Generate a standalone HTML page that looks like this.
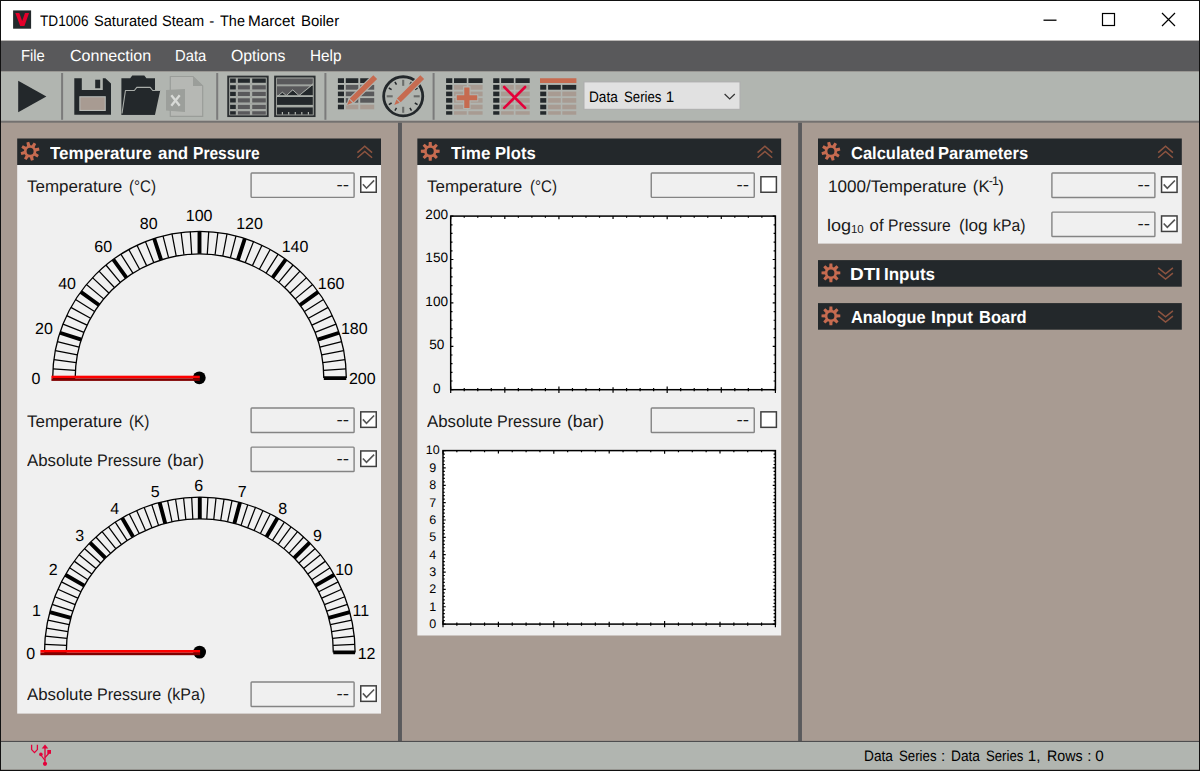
<!DOCTYPE html>
<html><head><meta charset="utf-8"><title>TD1006 Saturated Steam - The Marcet Boiler</title>
<style>
html,body{margin:0;padding:0}
body{width:1200px;height:771px;overflow:hidden;position:relative;background:#111;font-family:"Liberation Sans", sans-serif}
svg#g{position:absolute;left:0;top:0}
.t{position:absolute;white-space:pre;line-height:1;text-rendering:geometricPrecision}

</style></head><body>
<svg id="g" width="1200" height="771" viewBox="0 0 1200 771">
<rect x="0.00" y="0.00" width="1200.00" height="771.00" fill="#111" />
<rect x="1.00" y="1.00" width="1198.00" height="768.60" fill="#a89b92" />
<rect x="1.00" y="1.00" width="1198.00" height="39.70" fill="#fff" />
<rect x="1.00" y="40.70" width="1198.00" height="30.80" fill="#59595b" />
<rect x="1.00" y="71.50" width="1198.00" height="49.30" fill="#b1b5b0" />
<rect x="1.00" y="120.80" width="1198.00" height="1.90" fill="#737170" />
<rect x="398.00" y="122.70" width="3.95" height="618.50" fill="#5a5a5c" />
<rect x="798.15" y="122.70" width="3.80" height="618.50" fill="#5a5a5c" />
<rect x="1.00" y="742.00" width="1198.00" height="27.60" fill="#b1b5b0" />
<rect x="1.00" y="740.90" width="1198.00" height="1.10" fill="#4d4d4f" />
<rect x="13.10" y="10.40" width="18.00" height="18.30" fill="#23282b" />
<path d="M15.3 13.1 L19.3 13.1 L22.15 21.0 L25.0 13.1 L29.1 13.1 L24.4 26 L20.2 26 Z" fill="#e4002b"/>
<path d="M1043.5 20.2 H1056.5" stroke="#000" stroke-width="1.3" fill="none"/>
<rect x="1102.5" y="13.5" width="12" height="12" stroke="#000" stroke-width="1.2" fill="none"/>
<path d="M1162 13 L1175 26 M1175 13 L1162 26" stroke="#000" stroke-width="1.2" fill="none"/>
<rect x="61.10" y="73.00" width="2.00" height="46.80" fill="#7b7b7b" />
<rect x="216.20" y="73.00" width="2.00" height="46.80" fill="#7b7b7b" />
<rect x="324.40" y="73.00" width="2.00" height="46.80" fill="#7b7b7b" />
<rect x="432.60" y="73.00" width="2.00" height="46.80" fill="#7b7b7b" />
<path d="M18.2 80.8 L46.4 96.5 L18.2 112.2 Z" fill="#23282b"/>
<path d="M74.3 78.25 H81.8 V89.9 H102.8 V78.25 H105.4 L111 83.4 V114.7 H74.3 Z" fill="#23282b"/>
<rect x="95.20" y="79.70" width="5.00" height="8.55" fill="#23282b" />
<rect x="79.30" y="96.20" width="26.50" height="14.80" fill="#b9bcb8" />
<rect x="80.40" y="97.30" width="24.30" height="12.60" fill="#a89b92" />
<path d="M121.4 78.25 H130.2 L132.25 75.5 H144.3 L146.4 78.25 H155 V114.7 H121.4 Z" fill="#23282b"/>
<path d="M125.3 90.5 H134.3 L136.8 87.4 H150.2 L152.7 90.5 H160.2 L155 114.7 H121.6 Z" fill="#23282b"/>
<path d="M122.0 113.5 L125.45 90.5 H134.3 L136.8 87.4 H150.2 L152.7 90.5 H160.0" fill="none" stroke="#a9ada9" stroke-width="1.1" stroke-linejoin="round"/>
<path d="M170.3 76.5 H193 L202.7 86 V116.4 H170.3 Z" fill="#b6b8b4" stroke="#9a9d99" stroke-width="1.2"/>
<path d="M193 76.5 L202.7 86 H193 Z" fill="#9b9e9a"/>
<path d="M166 90.1 L185 89 V112 L166 110.5 Z" fill="#9c9f9b"/>
<path d="M171.3 95.2 L179.7 105.8 M179.7 95.2 L171.3 105.8" stroke="#d8dad7" stroke-width="2.3" fill="none"/>
<rect x="228.30" y="76.7" width="39.3" height="39.3" fill="#b1b5b0" stroke="#2b2f31" stroke-width="2.1"/>
<rect x="229.80" y="78.0" width="36.5" height="37.0" fill="none" stroke="#9b9e9a" stroke-width="0.8"/>
<rect x="230.10" y="78.50" width="5.70" height="4.30" fill="#23282b" />
<rect x="237.80" y="78.50" width="12.10" height="4.30" fill="#23282b" />
<rect x="252.20" y="78.50" width="13.60" height="4.30" fill="#23282b" />
<rect x="230.10" y="85.20" width="5.70" height="4.30" fill="#23282b" />
<rect x="237.80" y="85.20" width="12.10" height="4.30" fill="#59595b" />
<rect x="252.20" y="85.20" width="13.60" height="4.30" fill="#59595b" />
<rect x="230.10" y="91.75" width="5.70" height="4.30" fill="#23282b" />
<rect x="237.80" y="91.75" width="12.10" height="4.30" fill="#59595b" />
<rect x="252.20" y="91.75" width="13.60" height="4.30" fill="#59595b" />
<rect x="230.10" y="98.25" width="5.70" height="4.30" fill="#23282b" />
<rect x="237.80" y="98.25" width="12.10" height="4.30" fill="#59595b" />
<rect x="252.20" y="98.25" width="13.60" height="4.30" fill="#59595b" />
<rect x="230.10" y="104.75" width="5.70" height="4.30" fill="#23282b" />
<rect x="237.80" y="104.75" width="12.10" height="4.30" fill="#59595b" />
<rect x="252.20" y="104.75" width="13.60" height="4.30" fill="#59595b" />
<rect x="230.10" y="111.20" width="5.70" height="3.40" fill="#23282b" />
<rect x="237.80" y="111.20" width="12.10" height="3.40" fill="#59595b" />
<rect x="252.20" y="111.20" width="13.60" height="3.40" fill="#59595b" />
<path d="M229.8 84.0 H266.3 M229.8 90.55 H266.3 M229.8 97.1 H266.3 M229.8 103.6 H266.3 M229.8 110.1 H266.3 M236.8 78 V115 M251.05 78 V115" stroke="#9b9e9a" stroke-width="0.8" fill="none"/>
<rect x="275.20" y="76.7" width="39.3" height="39.3" fill="#b1b5b0" stroke="#2b2f31" stroke-width="2.1"/>
<rect x="276.70" y="78.0" width="36.5" height="37.0" fill="none" stroke="#9b9e9a" stroke-width="0.8"/>
<path d="M277 78.5 H312.8 V83.3 L311.4 84.5 H277 Z" fill="#59595b"/>
<path d="M277 86.3 H310 L299 95.2 L292.7 89.9 L286.3 95.2 L282.4 92.4 L277 95.2 Z" fill="#59595b"/>
<path d="M277 95.3 L282.4 92.6 L286.3 95.3 L292.7 90.2 L299 95.3 L312.8 84.6 V95.3 Z" fill="#23282b"/>
<path d="M276.4 85.35 H313.4 M276.4 95.9 H313.4 M276.4 106.15 H313.4" stroke="#9b9e9a" stroke-width="0.9" fill="none"/>
<path d="M276.6 97 L282.4 92.2 L286.3 95.6 L292.7 89.8 L299 95.6 L313.2 84.2" fill="none" stroke="#b1b5b0" stroke-width="0.9"/>
<rect x="277.00" y="97.00" width="35.80" height="7.90" fill="#23282b" />
<rect x="277.00" y="107.40" width="35.80" height="7.10" fill="#23282b" />
<rect x="281.80" y="112.00" width="1.20" height="2.60" fill="#b1b5b0" />
<rect x="288.10" y="112.00" width="1.20" height="2.60" fill="#b1b5b0" />
<rect x="294.70" y="112.00" width="1.20" height="2.60" fill="#b1b5b0" />
<rect x="301.20" y="112.00" width="1.20" height="2.60" fill="#b1b5b0" />
<rect x="307.80" y="112.00" width="1.20" height="2.60" fill="#b1b5b0" />
<rect x="337.90" y="78.25" width="6.10" height="4.75" fill="#23282b" />
<rect x="345.80" y="78.25" width="12.50" height="4.75" fill="#23282b" />
<rect x="360.20" y="78.25" width="14.00" height="4.75" fill="#23282b" />
<rect x="337.90" y="84.90" width="6.10" height="4.80" fill="#23282b" />
<rect x="345.80" y="84.90" width="12.50" height="4.80" fill="#59595b" />
<rect x="360.20" y="84.90" width="14.00" height="4.80" fill="#59595b" />
<rect x="337.90" y="91.60" width="6.10" height="4.60" fill="#23282b" />
<rect x="345.80" y="91.60" width="12.50" height="4.60" fill="#59595b" />
<rect x="360.20" y="91.60" width="14.00" height="4.60" fill="#59595b" />
<rect x="337.90" y="98.10" width="6.10" height="4.60" fill="#23282b" />
<rect x="345.80" y="98.10" width="12.50" height="4.60" fill="#59595b" />
<rect x="360.20" y="98.10" width="14.00" height="4.60" fill="#59595b" />
<rect x="337.90" y="104.70" width="6.10" height="4.60" fill="#23282b" />
<rect x="345.80" y="104.70" width="12.50" height="4.60" fill="#a89b92" />
<rect x="360.20" y="104.70" width="14.00" height="4.60" fill="#a89b92" />
<path d="M372.60 74.57 L348.28 98.54 L346.25 105.74 L353.47 103.81 L377.80 79.83 Z" fill="#b1b5b0"/>
<path d="M373.30 75.28 L349.76 98.48 L353.55 102.33 L377.10 79.12 Z M349.30 99.58 L347.10 104.90 L352.45 102.78 Z" fill="#c66b50"/>
<circle cx="403.2" cy="96.3" r="19.55" fill="none" stroke="#23282b" stroke-width="2.8"/>
<path d="M403.20 85.80 L403.20 79.80" stroke="#6b6d6b" stroke-width="2.1"/>
<path d="M409.90 84.70 L411.50 81.92" stroke="#23282b" stroke-width="1.5"/>
<path d="M414.80 89.60 L417.58 88.00" stroke="#23282b" stroke-width="1.5"/>
<path d="M413.70 96.30 L419.70 96.30" stroke="#6b6d6b" stroke-width="2.1"/>
<path d="M414.80 103.00 L417.58 104.60" stroke="#23282b" stroke-width="1.5"/>
<path d="M409.90 107.90 L411.50 110.68" stroke="#23282b" stroke-width="1.5"/>
<path d="M403.20 106.80 L403.20 112.80" stroke="#6b6d6b" stroke-width="2.1"/>
<path d="M396.50 107.90 L394.90 110.68" stroke="#23282b" stroke-width="1.5"/>
<path d="M391.60 103.00 L388.82 104.60" stroke="#23282b" stroke-width="1.5"/>
<path d="M392.70 96.30 L386.70 96.30" stroke="#6b6d6b" stroke-width="2.1"/>
<path d="M391.60 89.60 L388.82 88.00" stroke="#23282b" stroke-width="1.5"/>
<path d="M396.50 84.70 L394.90 81.92" stroke="#23282b" stroke-width="1.5"/>
<path d="M419.59 74.57 L395.45 98.54 L393.45 105.75 L400.67 103.79 L424.81 79.83 Z" fill="#b1b5b0"/>
<path d="M420.30 75.28 L396.94 98.47 L400.74 102.31 L424.10 79.12 Z M396.48 99.58 L394.30 104.90 L399.64 102.76 Z" fill="#c66b50"/>
<rect x="446.10" y="78.25" width="6.20" height="4.75" fill="#23282b" />
<rect x="454.00" y="78.25" width="12.75" height="4.75" fill="#23282b" />
<rect x="468.40" y="78.25" width="14.20" height="4.75" fill="#23282b" />
<rect x="446.10" y="84.90" width="6.20" height="4.80" fill="#23282b" />
<rect x="454.00" y="84.90" width="12.75" height="4.80" fill="#a89b92" />
<rect x="468.40" y="84.90" width="14.20" height="4.80" fill="#a89b92" />
<rect x="446.10" y="91.60" width="6.20" height="4.60" fill="#23282b" />
<rect x="454.00" y="91.60" width="12.75" height="4.60" fill="#a89b92" />
<rect x="468.40" y="91.60" width="14.20" height="4.60" fill="#a89b92" />
<rect x="446.10" y="98.10" width="6.20" height="4.60" fill="#23282b" />
<rect x="454.00" y="98.10" width="12.75" height="4.60" fill="#a89b92" />
<rect x="468.40" y="98.10" width="14.20" height="4.60" fill="#a89b92" />
<rect x="446.10" y="104.70" width="6.20" height="4.60" fill="#23282b" />
<rect x="454.00" y="104.70" width="12.75" height="4.60" fill="#a89b92" />
<rect x="468.40" y="104.70" width="14.20" height="4.60" fill="#a89b92" />
<rect x="446.10" y="111.20" width="6.20" height="3.50" fill="#23282b" />
<rect x="454.00" y="111.20" width="12.75" height="3.50" fill="#a89b92" />
<rect x="468.40" y="111.20" width="14.20" height="3.50" fill="#a89b92" />
<path d="M464.25 87.4 H469.5 V95.3 H477.2 V100.3 H469.5 V108 H464.25 V100.3 H456.75 V95.3 H464.25 Z" fill="#c66b50" stroke="#b1b5b0" stroke-width="2.2" paint-order="stroke"/>
<rect x="493.20" y="78.25" width="6.20" height="4.75" fill="#23282b" />
<rect x="501.10" y="78.25" width="12.70" height="4.75" fill="#23282b" />
<rect x="515.50" y="78.25" width="14.20" height="4.75" fill="#23282b" />
<rect x="493.20" y="84.90" width="6.20" height="4.80" fill="#23282b" />
<rect x="501.10" y="84.90" width="12.70" height="4.80" fill="#a89b92" />
<rect x="515.50" y="84.90" width="14.20" height="4.80" fill="#a89b92" />
<rect x="493.20" y="91.60" width="6.20" height="4.60" fill="#23282b" />
<rect x="501.10" y="91.60" width="12.70" height="4.60" fill="#a89b92" />
<rect x="515.50" y="91.60" width="14.20" height="4.60" fill="#a89b92" />
<rect x="493.20" y="98.10" width="6.20" height="4.60" fill="#23282b" />
<rect x="501.10" y="98.10" width="12.70" height="4.60" fill="#a89b92" />
<rect x="515.50" y="98.10" width="14.20" height="4.60" fill="#a89b92" />
<rect x="493.20" y="104.70" width="6.20" height="4.60" fill="#23282b" />
<rect x="501.10" y="104.70" width="12.70" height="4.60" fill="#a89b92" />
<rect x="515.50" y="104.70" width="14.20" height="4.60" fill="#a89b92" />
<rect x="493.20" y="111.20" width="6.20" height="3.50" fill="#23282b" />
<rect x="501.10" y="111.20" width="12.70" height="3.50" fill="#a89b92" />
<rect x="515.50" y="111.20" width="14.20" height="3.50" fill="#a89b92" />
<path d="M504.2 87 L525.1 107.9 M525.1 87 L504.2 107.9" stroke="#e4003a" stroke-width="2.6" stroke-linecap="round" fill="none"/>
<rect x="540.00" y="78.25" width="36.40" height="4.75" fill="#c66b50" />
<rect x="540.20" y="84.90" width="6.05" height="4.80" fill="#23282b" />
<rect x="548.10" y="84.90" width="12.70" height="4.80" fill="#23282b" />
<rect x="562.30" y="84.90" width="13.95" height="4.80" fill="#23282b" />
<rect x="540.20" y="91.60" width="6.05" height="4.60" fill="#23282b" />
<rect x="548.10" y="91.60" width="12.70" height="4.60" fill="#a89b92" />
<rect x="562.30" y="91.60" width="13.95" height="4.60" fill="#a89b92" />
<rect x="540.20" y="98.10" width="6.05" height="4.60" fill="#23282b" />
<rect x="548.10" y="98.10" width="12.70" height="4.60" fill="#a89b92" />
<rect x="562.30" y="98.10" width="13.95" height="4.60" fill="#a89b92" />
<rect x="540.20" y="104.70" width="6.05" height="4.60" fill="#23282b" />
<rect x="548.10" y="104.70" width="12.70" height="4.60" fill="#a89b92" />
<rect x="562.30" y="104.70" width="13.95" height="4.60" fill="#a89b92" />
<rect x="540.20" y="111.20" width="6.05" height="3.50" fill="#23282b" />
<rect x="548.10" y="111.20" width="12.70" height="3.50" fill="#a89b92" />
<rect x="562.30" y="111.20" width="13.95" height="3.50" fill="#a89b92" />
<rect x="584" y="81.9" width="156" height="27.4" fill="#e1e1e1" stroke="#adadad" stroke-width="1"/>
<path d="M724.6 94 L729.7 99 L734.8 94" fill="none" stroke="#333" stroke-width="1.2"/>
<rect x="17.20" y="138.50" width="363.80" height="26.60" fill="#23282b" />
<path d="M27.05 146.02 L26.42 142.54 L29.24 141.84 L30.31 145.20 L31.00 145.27 L31.68 145.41 L33.69 142.50 L36.18 144.00 L34.56 147.14 L35.00 147.67 L35.38 148.25 L38.86 147.62 L39.56 150.44 L36.20 151.51 L36.13 152.20 L35.99 152.88 L38.90 154.89 L37.40 157.38 L34.26 155.76 L33.73 156.20 L33.15 156.58 L33.78 160.06 L30.96 160.76 L29.89 157.40 L29.20 157.33 L28.52 157.19 L26.51 160.10 L24.02 158.60 L25.64 155.46 L25.20 154.93 L24.82 154.35 L21.34 154.98 L20.64 152.16 L24.00 151.09 L24.07 150.40 L24.21 149.72 L21.30 147.71 L22.80 145.22 L25.94 146.84 L26.47 146.40 Z M26.60 151.30 a3.5 3.5 0 1 0 7.0 0 a3.5 3.5 0 1 0 -7.0 0 Z" fill="#c66b50" fill-rule="evenodd"/>
<path d="M357.40 152.60 L364.75 146.30 L372.10 152.60" fill="none" stroke="#8d5440" stroke-width="1.5"/>
<path d="M357.40 157.80 L364.75 151.50 L372.10 157.80" fill="none" stroke="#8d5440" stroke-width="1.5"/>
<rect x="17.20" y="165.00" width="363.80" height="548.60" fill="#f0f0f0" />
<rect x="251.10" y="172.95" width="103.0" height="24.4" rx="0.8" fill="#f0f0f0" stroke="#848484" stroke-width="1.4"/>
<rect x="360.75" y="176.75" width="15.5" height="15.5" fill="#fff" stroke="#404040" stroke-width="1.5"/>
<path d="M362.90 184.30 L366.50 188.20 L374.10 180.40" fill="none" stroke="#555" stroke-width="1.6"/>
<rect x="251.10" y="408.05" width="103.0" height="24.4" rx="0.8" fill="#f0f0f0" stroke="#848484" stroke-width="1.4"/>
<rect x="360.75" y="411.85" width="15.5" height="15.5" fill="#fff" stroke="#404040" stroke-width="1.5"/>
<path d="M362.90 419.40 L366.50 423.30 L374.10 415.50" fill="none" stroke="#555" stroke-width="1.6"/>
<rect x="251.10" y="447.15" width="103.0" height="24.4" rx="0.8" fill="#f0f0f0" stroke="#848484" stroke-width="1.4"/>
<rect x="360.75" y="450.95" width="15.5" height="15.5" fill="#fff" stroke="#404040" stroke-width="1.5"/>
<path d="M362.90 458.50 L366.50 462.40 L374.10 454.60" fill="none" stroke="#555" stroke-width="1.6"/>
<rect x="251.10" y="682.05" width="103.0" height="24.4" rx="0.8" fill="#f0f0f0" stroke="#848484" stroke-width="1.4"/>
<rect x="360.75" y="685.85" width="15.5" height="15.5" fill="#fff" stroke="#404040" stroke-width="1.5"/>
<path d="M362.90 693.40 L366.50 697.30 L374.10 689.50" fill="none" stroke="#555" stroke-width="1.6"/>
<rect x="417.35" y="138.50" width="363.80" height="26.60" fill="#23282b" />
<path d="M428.57 145.44 L428.80 141.91 L431.70 141.91 L431.93 145.44 L432.58 145.66 L433.21 145.96 L435.86 143.63 L437.92 145.69 L435.59 148.34 L435.89 148.97 L436.11 149.62 L439.64 149.85 L439.64 152.75 L436.11 152.98 L435.89 153.63 L435.59 154.26 L437.92 156.91 L435.86 158.97 L433.21 156.64 L432.58 156.94 L431.93 157.16 L431.70 160.69 L428.80 160.69 L428.57 157.16 L427.92 156.94 L427.29 156.64 L424.64 158.97 L422.58 156.91 L424.91 154.26 L424.61 153.63 L424.39 152.98 L420.86 152.75 L420.86 149.85 L424.39 149.62 L424.61 148.97 L424.91 148.34 L422.58 145.69 L424.64 143.63 L427.29 145.96 L427.92 145.66 Z M426.75 151.30 a3.5 3.5 0 1 0 7.0 0 a3.5 3.5 0 1 0 -7.0 0 Z" fill="#c66b50" fill-rule="evenodd"/>
<path d="M757.55 152.60 L764.90 146.30 L772.25 152.60" fill="none" stroke="#8d5440" stroke-width="1.5"/>
<path d="M757.55 157.80 L764.90 151.50 L772.25 157.80" fill="none" stroke="#8d5440" stroke-width="1.5"/>
<rect x="417.35" y="165.00" width="363.80" height="470.50" fill="#f0f0f0" />
<rect x="651.25" y="172.95" width="103.0" height="24.4" rx="0.8" fill="#f0f0f0" stroke="#848484" stroke-width="1.4"/>
<rect x="760.90" y="176.75" width="15.5" height="15.5" fill="#fff" stroke="#404040" stroke-width="1.5"/>
<rect x="651.25" y="408.05" width="103.0" height="24.4" rx="0.8" fill="#f0f0f0" stroke="#848484" stroke-width="1.4"/>
<rect x="760.90" y="411.85" width="15.5" height="15.5" fill="#fff" stroke="#404040" stroke-width="1.5"/>
<rect x="818.00" y="138.50" width="363.80" height="26.60" fill="#23282b" />
<path d="M827.85 146.02 L827.22 142.54 L830.04 141.84 L831.11 145.20 L831.80 145.27 L832.48 145.41 L834.49 142.50 L836.98 144.00 L835.36 147.14 L835.80 147.67 L836.18 148.25 L839.66 147.62 L840.36 150.44 L837.00 151.51 L836.93 152.20 L836.79 152.88 L839.70 154.89 L838.20 157.38 L835.06 155.76 L834.53 156.20 L833.95 156.58 L834.58 160.06 L831.76 160.76 L830.69 157.40 L830.00 157.33 L829.32 157.19 L827.31 160.10 L824.82 158.60 L826.44 155.46 L826.00 154.93 L825.62 154.35 L822.14 154.98 L821.44 152.16 L824.80 151.09 L824.87 150.40 L825.01 149.72 L822.10 147.71 L823.60 145.22 L826.74 146.84 L827.27 146.40 Z M827.40 151.30 a3.5 3.5 0 1 0 7.0 0 a3.5 3.5 0 1 0 -7.0 0 Z" fill="#c66b50" fill-rule="evenodd"/>
<path d="M1158.20 152.60 L1165.55 146.30 L1172.90 152.60" fill="none" stroke="#8d5440" stroke-width="1.5"/>
<path d="M1158.20 157.80 L1165.55 151.50 L1172.90 157.80" fill="none" stroke="#8d5440" stroke-width="1.5"/>
<rect x="818.00" y="165.00" width="363.80" height="78.60" fill="#f0f0f0" />
<rect x="1051.90" y="173.05" width="103.0" height="24.4" rx="0.8" fill="#f0f0f0" stroke="#848484" stroke-width="1.4"/>
<rect x="1161.55" y="176.85" width="15.5" height="15.5" fill="#fff" stroke="#404040" stroke-width="1.5"/>
<path d="M1163.70 184.40 L1167.30 188.30 L1174.90 180.50" fill="none" stroke="#555" stroke-width="1.6"/>
<rect x="1051.90" y="212.15" width="103.0" height="24.4" rx="0.8" fill="#f0f0f0" stroke="#848484" stroke-width="1.4"/>
<rect x="1161.55" y="215.95" width="15.5" height="15.5" fill="#fff" stroke="#404040" stroke-width="1.5"/>
<path d="M1163.70 223.50 L1167.30 227.40 L1174.90 219.60" fill="none" stroke="#555" stroke-width="1.6"/>
<rect x="818.00" y="260.10" width="363.80" height="26.60" fill="#23282b" />
<path d="M829.22 267.04 L829.45 263.51 L832.35 263.51 L832.58 267.04 L833.23 267.26 L833.86 267.56 L836.51 265.23 L838.57 267.29 L836.24 269.94 L836.54 270.57 L836.76 271.22 L840.29 271.45 L840.29 274.35 L836.76 274.58 L836.54 275.23 L836.24 275.86 L838.57 278.51 L836.51 280.57 L833.86 278.24 L833.23 278.54 L832.58 278.76 L832.35 282.29 L829.45 282.29 L829.22 278.76 L828.57 278.54 L827.94 278.24 L825.29 280.57 L823.23 278.51 L825.56 275.86 L825.26 275.23 L825.04 274.58 L821.51 274.35 L821.51 271.45 L825.04 271.22 L825.26 270.57 L825.56 269.94 L823.23 267.29 L825.29 265.23 L827.94 267.56 L828.57 267.26 Z M827.40 272.90 a3.5 3.5 0 1 0 7.0 0 a3.5 3.5 0 1 0 -7.0 0 Z" fill="#c66b50" fill-rule="evenodd"/>
<path d="M1158.20 267.90 L1165.55 273.80 L1172.90 267.90" fill="none" stroke="#8d5440" stroke-width="1.5"/>
<path d="M1158.20 273.10 L1165.55 279.00 L1172.90 273.10" fill="none" stroke="#8d5440" stroke-width="1.5"/>
<rect x="818.00" y="303.10" width="363.80" height="26.60" fill="#23282b" />
<path d="M829.22 310.04 L829.45 306.51 L832.35 306.51 L832.58 310.04 L833.23 310.26 L833.86 310.56 L836.51 308.23 L838.57 310.29 L836.24 312.94 L836.54 313.57 L836.76 314.22 L840.29 314.45 L840.29 317.35 L836.76 317.58 L836.54 318.23 L836.24 318.86 L838.57 321.51 L836.51 323.57 L833.86 321.24 L833.23 321.54 L832.58 321.76 L832.35 325.29 L829.45 325.29 L829.22 321.76 L828.57 321.54 L827.94 321.24 L825.29 323.57 L823.23 321.51 L825.56 318.86 L825.26 318.23 L825.04 317.58 L821.51 317.35 L821.51 314.45 L825.04 314.22 L825.26 313.57 L825.56 312.94 L823.23 310.29 L825.29 308.23 L827.94 310.56 L828.57 310.26 Z M827.40 315.90 a3.5 3.5 0 1 0 7.0 0 a3.5 3.5 0 1 0 -7.0 0 Z" fill="#c66b50" fill-rule="evenodd"/>
<path d="M1158.20 310.90 L1165.55 316.80 L1172.90 310.90" fill="none" stroke="#8d5440" stroke-width="1.5"/>
<path d="M1158.20 316.10 L1165.55 322.00 L1172.90 316.10" fill="none" stroke="#8d5440" stroke-width="1.5"/>
<path d="M52.70 378.10 A146.8 146.8 0 0 1 346.30 378.10 M75.20 378.10 A124.3 124.3 0 0 1 323.80 378.10" fill="none" stroke="#000" stroke-width="1.3"/>
<path d="M75.45 370.30 L52.99 368.88 M76.18 362.52 L53.86 359.70 M77.40 354.81 L55.30 350.59 M79.11 347.19 L57.31 341.59 M83.93 332.34 L63.01 324.06 M87.03 325.18 L66.67 315.60 M90.58 318.22 L70.86 307.38 M94.55 311.50 L75.55 299.44 M103.73 298.87 L86.39 284.53 M108.89 293.01 L92.49 277.61 M114.41 287.49 L99.01 271.09 M120.27 282.33 L105.93 264.99 M132.90 273.15 L120.84 254.15 M139.62 269.18 L128.78 249.46 M146.58 265.63 L137.00 245.27 M153.74 262.53 L145.46 241.61 M168.59 257.71 L162.99 235.91 M176.21 256.00 L171.99 233.90 M183.92 254.78 L181.10 232.46 M191.70 254.05 L190.28 231.59 M207.30 254.05 L208.72 231.59 M215.08 254.78 L217.90 232.46 M222.79 256.00 L227.01 233.90 M230.41 257.71 L236.01 235.91 M245.26 262.53 L253.54 241.61 M252.42 265.63 L262.00 245.27 M259.38 269.18 L270.22 249.46 M266.10 273.15 L278.16 254.15 M278.73 282.33 L293.07 264.99 M284.59 287.49 L299.99 271.09 M290.11 293.01 L306.51 277.61 M295.27 298.87 L312.61 284.53 M304.45 311.50 L323.45 299.44 M308.42 318.22 L328.14 307.38 M311.97 325.18 L332.33 315.60 M315.07 332.34 L335.99 324.06 M319.89 347.19 L341.69 341.59 M321.60 354.81 L343.70 350.59 M322.82 362.52 L345.14 359.70 M323.55 370.30 L346.01 368.88" stroke="#000" stroke-width="1.25" fill="none"/>
<path d="M75.20 378.10 L52.70 378.10 M81.28 339.69 L59.88 332.74 M98.94 305.04 L80.74 291.81 M126.44 277.54 L113.21 259.34 M161.09 259.88 L154.14 238.48 M199.50 253.80 L199.50 231.30 M237.91 259.88 L244.86 238.48 M272.56 277.54 L285.79 259.34 M300.06 305.04 L318.26 291.81 M317.72 339.69 L339.12 332.74 M323.80 378.10 L346.30 378.10" stroke="#000" stroke-width="3.9" fill="none"/>
<circle cx="199.30" cy="377.80" r="6.4" fill="#000"/>
<rect x="51.40" y="375.70" width="148.40" height="2.70" fill="#ff0000" />
<rect x="51.40" y="378.40" width="148.40" height="2.50" fill="#800000" />
<path d="M44.50 652.40 A155.3 155.3 0 0 1 355.10 652.40 M66.30 652.40 A133.5 133.5 0 0 1 333.30 652.40" fill="none" stroke="#000" stroke-width="1.3"/>
<path d="M66.48 645.41 L44.71 644.27 M67.03 638.45 L45.35 636.17 M67.94 631.52 L46.41 628.11 M69.22 624.64 L47.89 620.11 M72.83 611.15 L52.10 604.41 M75.17 604.56 L54.81 596.75 M77.84 598.10 L57.93 589.23 M80.85 591.79 L61.43 581.90 M87.84 579.69 L69.55 567.82 M91.80 573.93 L74.16 561.12 M96.05 568.39 L79.11 554.67 M100.59 563.07 L84.39 548.48 M110.47 553.19 L95.88 536.99 M115.79 548.65 L102.07 531.71 M121.33 544.40 L108.52 526.76 M127.09 540.44 L115.22 522.15 M139.19 533.45 L129.30 514.03 M145.50 530.44 L136.63 510.53 M151.96 527.77 L144.15 507.41 M158.55 525.43 L151.81 504.70 M172.04 521.82 L167.51 500.49 M178.92 520.54 L175.51 499.01 M185.85 519.63 L183.57 497.95 M192.81 519.08 L191.67 497.31 M206.79 519.08 L207.93 497.31 M213.75 519.63 L216.03 497.95 M220.68 520.54 L224.09 499.01 M227.56 521.82 L232.09 500.49 M241.05 525.43 L247.79 504.70 M247.64 527.77 L255.45 507.41 M254.10 530.44 L262.97 510.53 M260.41 533.45 L270.30 514.03 M272.51 540.44 L284.38 522.15 M278.27 544.40 L291.08 526.76 M283.81 548.65 L297.53 531.71 M289.13 553.19 L303.72 536.99 M299.01 563.07 L315.21 548.48 M303.55 568.39 L320.49 554.67 M307.80 573.93 L325.44 561.12 M311.76 579.69 L330.05 567.82 M318.75 591.79 L338.17 581.90 M321.76 598.10 L341.67 589.23 M324.43 604.56 L344.79 596.75 M326.77 611.15 L347.50 604.41 M330.38 624.64 L351.71 620.11 M331.66 631.52 L353.19 628.11 M332.57 638.45 L354.25 636.17 M333.12 645.41 L354.89 644.27" stroke="#000" stroke-width="1.25" fill="none"/>
<path d="M66.30 652.40 L44.50 652.40 M70.85 617.85 L49.79 612.21 M84.19 585.65 L65.31 574.75 M105.40 558.00 L89.99 542.59 M133.05 536.79 L122.15 517.91 M165.25 523.45 L159.61 502.39 M199.80 518.90 L199.80 497.10 M234.35 523.45 L239.99 502.39 M266.55 536.79 L277.45 517.91 M294.20 558.00 L309.61 542.59 M315.41 585.65 L334.29 574.75 M328.75 617.85 L349.81 612.21 M333.30 652.40 L355.10 652.40" stroke="#000" stroke-width="3.9" fill="none"/>
<circle cx="199.60" cy="652.10" r="6.4" fill="#000"/>
<rect x="40.40" y="650.00" width="159.70" height="2.70" fill="#ff0000" />
<rect x="40.40" y="652.70" width="159.70" height="2.50" fill="#800000" />
<rect x="450.70" y="216.10" width="324.70" height="173.60" fill="#fff" />
<rect x="450.70" y="216.10" width="324.70" height="173.60" fill="none" stroke="#000" stroke-width="1.5"/>
<path d="M450.70 386.50 V392.90 M450.70 216.10 V219.30 M464.23 388.10 V391.30 M464.23 216.10 V217.70 M477.76 388.10 V391.30 M477.76 216.10 V217.70 M491.29 388.10 V391.30 M491.29 216.10 V217.70 M504.82 387.30 V392.70 M504.82 216.10 V219.10 M518.35 388.10 V391.30 M518.35 216.10 V217.70 M531.88 388.10 V391.30 M531.88 216.10 V217.70 M545.40 388.10 V391.30 M545.40 216.10 V217.70 M558.93 386.50 V392.90 M558.93 216.10 V219.30 M572.46 388.10 V391.30 M572.46 216.10 V217.70 M585.99 388.10 V391.30 M585.99 216.10 V217.70 M599.52 388.10 V391.30 M599.52 216.10 V217.70 M613.05 387.30 V392.70 M613.05 216.10 V219.10 M626.58 388.10 V391.30 M626.58 216.10 V217.70 M640.11 388.10 V391.30 M640.11 216.10 V217.70 M653.64 388.10 V391.30 M653.64 216.10 V217.70 M667.17 386.50 V392.90 M667.17 216.10 V219.30 M680.70 388.10 V391.30 M680.70 216.10 V217.70 M694.22 388.10 V391.30 M694.22 216.10 V217.70 M707.75 388.10 V391.30 M707.75 216.10 V217.70 M721.28 387.30 V392.70 M721.28 216.10 V219.10 M734.81 388.10 V391.30 M734.81 216.10 V217.70 M748.34 388.10 V391.30 M748.34 216.10 V217.70 M761.87 388.10 V391.30 M761.87 216.10 V217.70 M775.40 386.50 V392.90 M775.40 216.10 V219.30 M450.70 389.70 H453.40 M775.40 389.70 H772.70 M450.70 381.02 H452.50 M775.40 381.02 H773.60 M450.70 372.34 H452.50 M775.40 372.34 H773.60 M450.70 363.66 H452.50 M775.40 363.66 H773.60 M450.70 354.98 H452.50 M775.40 354.98 H773.60 M450.70 346.30 H453.40 M775.40 346.30 H772.70 M450.70 337.62 H452.50 M775.40 337.62 H773.60 M450.70 328.94 H452.50 M775.40 328.94 H773.60 M450.70 320.26 H452.50 M775.40 320.26 H773.60 M450.70 311.58 H452.50 M775.40 311.58 H773.60 M450.70 302.90 H453.40 M775.40 302.90 H772.70 M450.70 294.22 H452.50 M775.40 294.22 H773.60 M450.70 285.54 H452.50 M775.40 285.54 H773.60 M450.70 276.86 H452.50 M775.40 276.86 H773.60 M450.70 268.18 H452.50 M775.40 268.18 H773.60 M450.70 259.50 H453.40 M775.40 259.50 H772.70 M450.70 250.82 H452.50 M775.40 250.82 H773.60 M450.70 242.14 H452.50 M775.40 242.14 H773.60 M450.70 233.46 H452.50 M775.40 233.46 H773.60 M450.70 224.78 H452.50 M775.40 224.78 H773.60 M450.70 216.10 H453.40 M775.40 216.10 H772.70" stroke="#000" stroke-width="1.2" fill="none"/>
<rect x="443.00" y="450.60" width="332.40" height="173.50" fill="#fff" />
<rect x="443.00" y="450.60" width="332.40" height="173.50" fill="none" stroke="#000" stroke-width="1.5"/>
<path d="M443.00 620.90 V627.30 M443.00 450.60 V453.80 M456.85 622.50 V625.70 M456.85 450.60 V452.20 M470.70 622.50 V625.70 M470.70 450.60 V452.20 M484.55 622.50 V625.70 M484.55 450.60 V452.20 M498.40 621.70 V627.10 M498.40 450.60 V453.60 M512.25 622.50 V625.70 M512.25 450.60 V452.20 M526.10 622.50 V625.70 M526.10 450.60 V452.20 M539.95 622.50 V625.70 M539.95 450.60 V452.20 M553.80 620.90 V627.30 M553.80 450.60 V453.80 M567.65 622.50 V625.70 M567.65 450.60 V452.20 M581.50 622.50 V625.70 M581.50 450.60 V452.20 M595.35 622.50 V625.70 M595.35 450.60 V452.20 M609.20 621.70 V627.10 M609.20 450.60 V453.60 M623.05 622.50 V625.70 M623.05 450.60 V452.20 M636.90 622.50 V625.70 M636.90 450.60 V452.20 M650.75 622.50 V625.70 M650.75 450.60 V452.20 M664.60 620.90 V627.30 M664.60 450.60 V453.80 M678.45 622.50 V625.70 M678.45 450.60 V452.20 M692.30 622.50 V625.70 M692.30 450.60 V452.20 M706.15 622.50 V625.70 M706.15 450.60 V452.20 M720.00 621.70 V627.10 M720.00 450.60 V453.60 M733.85 622.50 V625.70 M733.85 450.60 V452.20 M747.70 622.50 V625.70 M747.70 450.60 V452.20 M761.55 622.50 V625.70 M761.55 450.60 V452.20 M775.40 620.90 V627.30 M775.40 450.60 V453.80 M443.00 624.10 H445.70 M775.40 624.10 H772.70 M443.00 620.63 H444.80 M775.40 620.63 H773.60 M443.00 617.16 H444.80 M775.40 617.16 H773.60 M443.00 613.69 H444.80 M775.40 613.69 H773.60 M443.00 610.22 H444.80 M775.40 610.22 H773.60 M443.00 606.75 H445.70 M775.40 606.75 H772.70 M443.00 603.28 H444.80 M775.40 603.28 H773.60 M443.00 599.81 H444.80 M775.40 599.81 H773.60 M443.00 596.34 H444.80 M775.40 596.34 H773.60 M443.00 592.87 H444.80 M775.40 592.87 H773.60 M443.00 589.40 H445.70 M775.40 589.40 H772.70 M443.00 585.93 H444.80 M775.40 585.93 H773.60 M443.00 582.46 H444.80 M775.40 582.46 H773.60 M443.00 578.99 H444.80 M775.40 578.99 H773.60 M443.00 575.52 H444.80 M775.40 575.52 H773.60 M443.00 572.05 H445.70 M775.40 572.05 H772.70 M443.00 568.58 H444.80 M775.40 568.58 H773.60 M443.00 565.11 H444.80 M775.40 565.11 H773.60 M443.00 561.64 H444.80 M775.40 561.64 H773.60 M443.00 558.17 H444.80 M775.40 558.17 H773.60 M443.00 554.70 H445.70 M775.40 554.70 H772.70 M443.00 551.23 H444.80 M775.40 551.23 H773.60 M443.00 547.76 H444.80 M775.40 547.76 H773.60 M443.00 544.29 H444.80 M775.40 544.29 H773.60 M443.00 540.82 H444.80 M775.40 540.82 H773.60 M443.00 537.35 H445.70 M775.40 537.35 H772.70 M443.00 533.88 H444.80 M775.40 533.88 H773.60 M443.00 530.41 H444.80 M775.40 530.41 H773.60 M443.00 526.94 H444.80 M775.40 526.94 H773.60 M443.00 523.47 H444.80 M775.40 523.47 H773.60 M443.00 520.00 H445.70 M775.40 520.00 H772.70 M443.00 516.53 H444.80 M775.40 516.53 H773.60 M443.00 513.06 H444.80 M775.40 513.06 H773.60 M443.00 509.59 H444.80 M775.40 509.59 H773.60 M443.00 506.12 H444.80 M775.40 506.12 H773.60 M443.00 502.65 H445.70 M775.40 502.65 H772.70 M443.00 499.18 H444.80 M775.40 499.18 H773.60 M443.00 495.71 H444.80 M775.40 495.71 H773.60 M443.00 492.24 H444.80 M775.40 492.24 H773.60 M443.00 488.77 H444.80 M775.40 488.77 H773.60 M443.00 485.30 H445.70 M775.40 485.30 H772.70 M443.00 481.83 H444.80 M775.40 481.83 H773.60 M443.00 478.36 H444.80 M775.40 478.36 H773.60 M443.00 474.89 H444.80 M775.40 474.89 H773.60 M443.00 471.42 H444.80 M775.40 471.42 H773.60 M443.00 467.95 H445.70 M775.40 467.95 H772.70 M443.00 464.48 H444.80 M775.40 464.48 H773.60 M443.00 461.01 H444.80 M775.40 461.01 H773.60 M443.00 457.54 H444.80 M775.40 457.54 H773.60 M443.00 454.07 H444.80 M775.40 454.07 H773.60 M443.00 450.60 H445.70 M775.40 450.60 H772.70" stroke="#000" stroke-width="1.2" fill="none"/>
<path d="M31.6 744.8 V749.6 L34.5 752.6 L37.4 749.6 V744.8" fill="none" stroke="#e4003a" stroke-width="1.3"/>
<path d="M45 746 V763" stroke="#e4003a" stroke-width="1.3" fill="none"/>
<path d="M41.7 748.6 L45 744.6 L48.3 748.6 Z" fill="#e4003a"/>
<circle cx="45" cy="763.8" r="2.1" fill="#e4003a"/>
<circle cx="40.9" cy="754.4" r="1.8" fill="#e4003a"/>
<rect x="47.30" y="750.00" width="3.70" height="3.80" fill="#e4003a" />
<path d="M40.9 755 L45 760.5 M49.1 753 L45 757.6" stroke="#e4003a" stroke-width="1.2" fill="none"/>
</svg>
<span class="t" style="top:14.00px;font-size:15.2px;color:#000;transform:scaleX(0.8976);transform-origin:0 0;left:39.90px;">TD1006</span>
<span class="t" style="top:14.00px;font-size:15.2px;color:#000;transform:scaleX(0.9616);transform-origin:0 0;left:93.80px;">Saturated</span>
<span class="t" style="top:14.00px;font-size:15.2px;color:#000;transform:scaleX(0.9597);transform-origin:0 0;left:162.10px;">Steam</span>
<span class="t" style="top:14.00px;font-size:15.2px;color:#000;left:161.70px;width:100px;text-align:center;">-</span>
<span class="t" style="top:14.00px;font-size:15.2px;color:#000;transform:scaleX(0.9524);transform-origin:0 0;left:219.50px;">The</span>
<span class="t" style="top:14.00px;font-size:15.2px;color:#000;transform:scaleX(1.0066);transform-origin:0 0;left:248.49px;">Marcet</span>
<span class="t" style="top:14.00px;font-size:15.2px;color:#000;transform:scaleX(0.9822);transform-origin:0 0;left:300.52px;">Boiler</span>
<span class="t" style="top:49.00px;font-size:16.0px;color:#fff;transform:scaleX(0.9243);transform-origin:0 0;left:20.68px;">File</span>
<span class="t" style="top:49.00px;font-size:16.0px;color:#fff;transform:scaleX(1.0032);transform-origin:0 0;left:69.60px;">Connection</span>
<span class="t" style="top:49.00px;font-size:16.0px;color:#fff;transform:scaleX(0.9241);transform-origin:0 0;left:174.58px;">Data</span>
<span class="t" style="top:49.00px;font-size:16.0px;color:#fff;transform:scaleX(0.9884);transform-origin:0 0;left:231.40px;">Options</span>
<span class="t" style="top:49.00px;font-size:16.0px;color:#fff;transform:scaleX(0.9560);transform-origin:0 0;left:310.44px;">Help</span>
<span class="t" style="top:90.00px;font-size:15.2px;color:#000;transform:scaleX(0.8978);transform-origin:0 0;left:588.50px;">Data</span>
<span class="t" style="top:90.00px;font-size:15.2px;color:#000;transform:scaleX(0.8699);transform-origin:0 0;left:623.50px;">Series</span>
<span class="t" style="top:90.00px;font-size:15.2px;color:#000;left:619.90px;width:100px;text-align:center;">1</span>
<span class="t" style="top:749.00px;font-size:15.2px;color:#000;transform:scaleX(0.9009);transform-origin:0 0;left:863.90px;">Data</span>
<span class="t" style="top:749.00px;font-size:15.2px;color:#000;transform:scaleX(0.8722);transform-origin:0 0;left:899.40px;">Series</span>
<span class="t" style="top:749.00px;font-size:15.2px;color:#000;left:893.00px;width:100px;text-align:center;">:</span>
<span class="t" style="top:749.00px;font-size:15.2px;color:#000;transform:scaleX(0.9041);transform-origin:0 0;left:950.50px;">Data</span>
<span class="t" style="top:749.00px;font-size:15.2px;color:#000;transform:scaleX(0.8676);transform-origin:0 0;left:985.60px;">Series</span>
<span class="t" style="top:749.00px;font-size:15.2px;color:#000;left:984.10px;width:100px;text-align:center;">1,</span>
<span class="t" style="top:749.00px;font-size:15.2px;color:#000;transform:scaleX(0.9363);transform-origin:0 0;left:1047.36px;">Rows</span>
<span class="t" style="top:749.00px;font-size:15.2px;color:#000;left:1039.40px;width:100px;text-align:center;">:</span>
<span class="t" style="top:749.00px;font-size:15.2px;color:#000;left:1049.55px;width:100px;text-align:center;">0</span>
<span class="t" style="top:145.00px;font-size:17.4px;color:#fff;font-weight:700;transform:scaleX(0.9762);transform-origin:0 0;left:50.20px;">Temperature</span>
<span class="t" style="top:145.00px;font-size:17.4px;color:#fff;font-weight:700;transform:scaleX(0.9738);transform-origin:0 0;left:158.10px;">and</span>
<span class="t" style="top:145.00px;font-size:17.4px;color:#fff;font-weight:700;transform:scaleX(0.8946);transform-origin:0 0;left:192.61px;">Pressure</span>
<span class="t" style="top:145.00px;font-size:17.4px;color:#fff;font-weight:700;transform:scaleX(0.9778);transform-origin:0 0;left:450.50px;">Time</span>
<span class="t" style="top:145.00px;font-size:17.4px;color:#fff;font-weight:700;transform:scaleX(0.9573);transform-origin:0 0;left:494.84px;">Plots</span>
<span class="t" style="top:145.00px;font-size:17.4px;color:#fff;font-weight:700;transform:scaleX(0.9493);transform-origin:0 0;left:850.60px;">Calculated</span>
<span class="t" style="top:145.00px;font-size:17.4px;color:#fff;font-weight:700;transform:scaleX(0.9519);transform-origin:0 0;left:937.95px;">Parameters</span>
<span class="t" style="top:266.00px;font-size:17.4px;color:#fff;font-weight:700;transform:scaleX(1.0885);transform-origin:0 0;left:849.71px;">DTI</span>
<span class="t" style="top:266.00px;font-size:17.4px;color:#fff;font-weight:700;transform:scaleX(0.9784);transform-origin:0 0;left:883.52px;">Inputs</span>
<span class="t" style="top:309.00px;font-size:17.4px;color:#fff;font-weight:700;transform:scaleX(0.9402);transform-origin:0 0;left:850.50px;">Analogue</span>
<span class="t" style="top:309.00px;font-size:17.4px;color:#fff;font-weight:700;transform:scaleX(0.9880);transform-origin:0 0;left:931.01px;">Input</span>
<span class="t" style="top:309.00px;font-size:17.4px;color:#fff;font-weight:700;transform:scaleX(0.9481);transform-origin:0 0;left:979.25px;">Board</span>
<span class="t" style="top:179.00px;font-size:16.8px;color:#1a1a1a;transform:scaleX(1.0109);transform-origin:0 0;left:26.80px;">Temperature</span>
<span class="t" style="top:179.00px;font-size:16.8px;color:#1a1a1a;transform:scaleX(0.9008);transform-origin:0 0;left:129.30px;">(°C)</span>
<span class="t" style="top:414.00px;font-size:16.8px;color:#1a1a1a;transform:scaleX(1.0109);transform-origin:0 0;left:26.80px;">Temperature</span>
<span class="t" style="top:414.00px;font-size:16.8px;color:#1a1a1a;transform:scaleX(0.9143);transform-origin:0 0;left:129.29px;">(K)</span>
<span class="t" style="top:453.00px;font-size:16.8px;color:#1a1a1a;transform:scaleX(1.0035);transform-origin:0 0;left:26.50px;">Absolute</span>
<span class="t" style="top:453.00px;font-size:16.8px;color:#1a1a1a;transform:scaleX(0.9572);transform-origin:0 0;left:96.84px;">Pressure</span>
<span class="t" style="top:453.00px;font-size:16.8px;color:#1a1a1a;transform:scaleX(1.0460);transform-origin:0 0;left:166.55px;">(bar)</span>
<span class="t" style="top:687.00px;font-size:16.8px;color:#1a1a1a;transform:scaleX(1.0035);transform-origin:0 0;left:26.50px;">Absolute</span>
<span class="t" style="top:687.00px;font-size:16.8px;color:#1a1a1a;transform:scaleX(0.9572);transform-origin:0 0;left:96.84px;">Pressure</span>
<span class="t" style="top:687.00px;font-size:16.8px;color:#1a1a1a;transform:scaleX(0.9531);transform-origin:0 0;left:166.65px;">(kPa)</span>
<span class="t" style="top:179.00px;font-size:16.8px;color:#1a1a1a;transform:scaleX(1.0109);transform-origin:0 0;left:427.20px;">Temperature</span>
<span class="t" style="top:179.00px;font-size:16.8px;color:#1a1a1a;transform:scaleX(0.9008);transform-origin:0 0;left:529.70px;">(°C)</span>
<span class="t" style="top:414.00px;font-size:16.8px;color:#1a1a1a;transform:scaleX(1.0035);transform-origin:0 0;left:426.90px;">Absolute</span>
<span class="t" style="top:414.00px;font-size:16.8px;color:#1a1a1a;transform:scaleX(0.9572);transform-origin:0 0;left:497.24px;">Pressure</span>
<span class="t" style="top:414.00px;font-size:16.8px;color:#1a1a1a;transform:scaleX(1.0460);transform-origin:0 0;left:566.95px;">(bar)</span>
<span class="t" style="top:179.00px;font-size:16.8px;color:#1a1a1a;transform:scaleX(1.0173);transform-origin:0 0;left:827.58px;">1000/Temperature</span>
<span class="t" style="top:179.00px;font-size:16.8px;color:#1a1a1a;left:931.20px;width:100px;text-align:center;">(K</span>
<span class="t" style="top:179.00px;font-size:16.8px;color:#1a1a1a;left:951.10px;width:100px;text-align:center;">)</span>
<span class="t" style="top:175.00px;font-size:12.5px;color:#1a1a1a;left:940.90px;width:100px;text-align:center;">-</span>
<span class="t" style="top:175.00px;font-size:12.5px;color:#1a1a1a;left:945.40px;width:100px;text-align:center;">1</span>
<span class="t" style="top:218.00px;font-size:16.8px;color:#1a1a1a;transform:scaleX(1.0778);transform-origin:0 0;left:826.52px;">log</span>
<span class="t" style="top:218.00px;font-size:16.8px;color:#1a1a1a;left:826.60px;width:100px;text-align:center;">of</span>
<span class="t" style="top:218.00px;font-size:16.8px;color:#1a1a1a;transform:scaleX(0.9329);transform-origin:0 0;left:888.17px;">Pressure</span>
<span class="t" style="top:218.00px;font-size:16.8px;color:#1a1a1a;transform:scaleX(1.0244);transform-origin:0 0;left:958.88px;">(log</span>
<span class="t" style="top:218.00px;font-size:16.8px;color:#1a1a1a;transform:scaleX(0.9387);transform-origin:0 0;left:992.56px;">kPa)</span>
<span class="t" style="top:225.00px;font-size:11.5px;color:#1a1a1a;left:807.30px;width:100px;text-align:center;">10</span>
<span class="t" style="top:177.00px;font-size:16.4px;color:#1a1a1a;transform:scaleX(1.1474);transform-origin:100% 0;left:249.33px;width:100px;text-align:right;">--</span>
<span class="t" style="top:412.00px;font-size:16.4px;color:#1a1a1a;transform:scaleX(1.1474);transform-origin:100% 0;left:249.33px;width:100px;text-align:right;">--</span>
<span class="t" style="top:451.00px;font-size:16.4px;color:#1a1a1a;transform:scaleX(1.1474);transform-origin:100% 0;left:249.33px;width:100px;text-align:right;">--</span>
<span class="t" style="top:686.00px;font-size:16.4px;color:#1a1a1a;transform:scaleX(1.1474);transform-origin:100% 0;left:249.33px;width:100px;text-align:right;">--</span>
<span class="t" style="top:177.00px;font-size:16.4px;color:#1a1a1a;transform:scaleX(1.1474);transform-origin:100% 0;left:649.48px;width:100px;text-align:right;">--</span>
<span class="t" style="top:412.00px;font-size:16.4px;color:#1a1a1a;transform:scaleX(1.1474);transform-origin:100% 0;left:649.48px;width:100px;text-align:right;">--</span>
<span class="t" style="top:177.00px;font-size:16.4px;color:#1a1a1a;transform:scaleX(1.1474);transform-origin:100% 0;left:1050.13px;width:100px;text-align:right;">--</span>
<span class="t" style="top:216.00px;font-size:16.4px;color:#1a1a1a;transform:scaleX(1.1474);transform-origin:100% 0;left:1050.13px;width:100px;text-align:right;">--</span>
<span class="t" style="top:372.00px;font-size:16px;color:#000;left:-14.10px;width:100px;text-align:center;">0</span>
<span class="t" style="top:322.00px;font-size:16px;color:#000;left:-6.11px;width:100px;text-align:center;">20</span>
<span class="t" style="top:277.00px;font-size:16px;color:#000;left:17.07px;width:100px;text-align:center;">40</span>
<span class="t" style="top:240.00px;font-size:16px;color:#000;left:53.17px;width:100px;text-align:center;">60</span>
<span class="t" style="top:217.00px;font-size:16px;color:#000;left:98.67px;width:100px;text-align:center;">80</span>
<span class="t" style="top:209.00px;font-size:16px;color:#000;left:149.10px;width:100px;text-align:center;">100</span>
<span class="t" style="top:217.00px;font-size:16px;color:#000;left:199.53px;width:100px;text-align:center;">120</span>
<span class="t" style="top:240.00px;font-size:16px;color:#000;left:245.03px;width:100px;text-align:center;">140</span>
<span class="t" style="top:277.00px;font-size:16px;color:#000;left:281.13px;width:100px;text-align:center;">160</span>
<span class="t" style="top:322.00px;font-size:16px;color:#000;left:304.31px;width:100px;text-align:center;">180</span>
<span class="t" style="top:372.00px;font-size:16px;color:#000;left:312.30px;width:100px;text-align:center;">200</span>
<span class="t" style="top:647.00px;font-size:16px;color:#000;left:-19.40px;width:100px;text-align:center;">0</span>
<span class="t" style="top:604.00px;font-size:16px;color:#000;left:-13.68px;width:100px;text-align:center;">1</span>
<span class="t" style="top:563.00px;font-size:16px;color:#000;left:3.11px;width:100px;text-align:center;">2</span>
<span class="t" style="top:529.00px;font-size:16px;color:#000;left:29.81px;width:100px;text-align:center;">3</span>
<span class="t" style="top:502.00px;font-size:16px;color:#000;left:64.60px;width:100px;text-align:center;">4</span>
<span class="t" style="top:485.00px;font-size:16px;color:#000;left:105.12px;width:100px;text-align:center;">5</span>
<span class="t" style="top:479.00px;font-size:16px;color:#000;left:148.60px;width:100px;text-align:center;">6</span>
<span class="t" style="top:485.00px;font-size:16px;color:#000;left:192.08px;width:100px;text-align:center;">7</span>
<span class="t" style="top:502.00px;font-size:16px;color:#000;left:232.60px;width:100px;text-align:center;">8</span>
<span class="t" style="top:529.00px;font-size:16px;color:#000;left:267.39px;width:100px;text-align:center;">9</span>
<span class="t" style="top:563.00px;font-size:16px;color:#000;left:294.09px;width:100px;text-align:center;">10</span>
<span class="t" style="top:604.00px;font-size:16px;color:#000;left:310.88px;width:100px;text-align:center;">11</span>
<span class="t" style="top:647.00px;font-size:16px;color:#000;left:316.60px;width:100px;text-align:center;">12</span>
<span class="t" style="top:382.00px;font-size:13.6px;color:#000;left:386.70px;width:100px;text-align:center;">0</span>
<span class="t" style="top:338.00px;font-size:13.6px;color:#000;left:386.70px;width:100px;text-align:center;">50</span>
<span class="t" style="top:295.00px;font-size:13.6px;color:#000;left:386.70px;width:100px;text-align:center;">100</span>
<span class="t" style="top:251.00px;font-size:13.6px;color:#000;left:386.70px;width:100px;text-align:center;">150</span>
<span class="t" style="top:208.00px;font-size:13.6px;color:#000;left:386.70px;width:100px;text-align:center;">200</span>
<span class="t" style="top:618.00px;font-size:12.5px;color:#000;left:382.70px;width:100px;text-align:center;">0</span>
<span class="t" style="top:601.00px;font-size:12.5px;color:#000;left:382.70px;width:100px;text-align:center;">1</span>
<span class="t" style="top:583.00px;font-size:12.5px;color:#000;left:382.70px;width:100px;text-align:center;">2</span>
<span class="t" style="top:566.00px;font-size:12.5px;color:#000;left:382.70px;width:100px;text-align:center;">3</span>
<span class="t" style="top:549.00px;font-size:12.5px;color:#000;left:382.70px;width:100px;text-align:center;">4</span>
<span class="t" style="top:531.00px;font-size:12.5px;color:#000;left:382.70px;width:100px;text-align:center;">5</span>
<span class="t" style="top:514.00px;font-size:12.5px;color:#000;left:382.70px;width:100px;text-align:center;">6</span>
<span class="t" style="top:497.00px;font-size:12.5px;color:#000;left:382.70px;width:100px;text-align:center;">7</span>
<span class="t" style="top:479.00px;font-size:12.5px;color:#000;left:382.70px;width:100px;text-align:center;">8</span>
<span class="t" style="top:462.00px;font-size:12.5px;color:#000;left:382.70px;width:100px;text-align:center;">9</span>
<span class="t" style="top:444.00px;font-size:12.5px;color:#000;left:382.70px;width:100px;text-align:center;">10</span>
</body></html>
